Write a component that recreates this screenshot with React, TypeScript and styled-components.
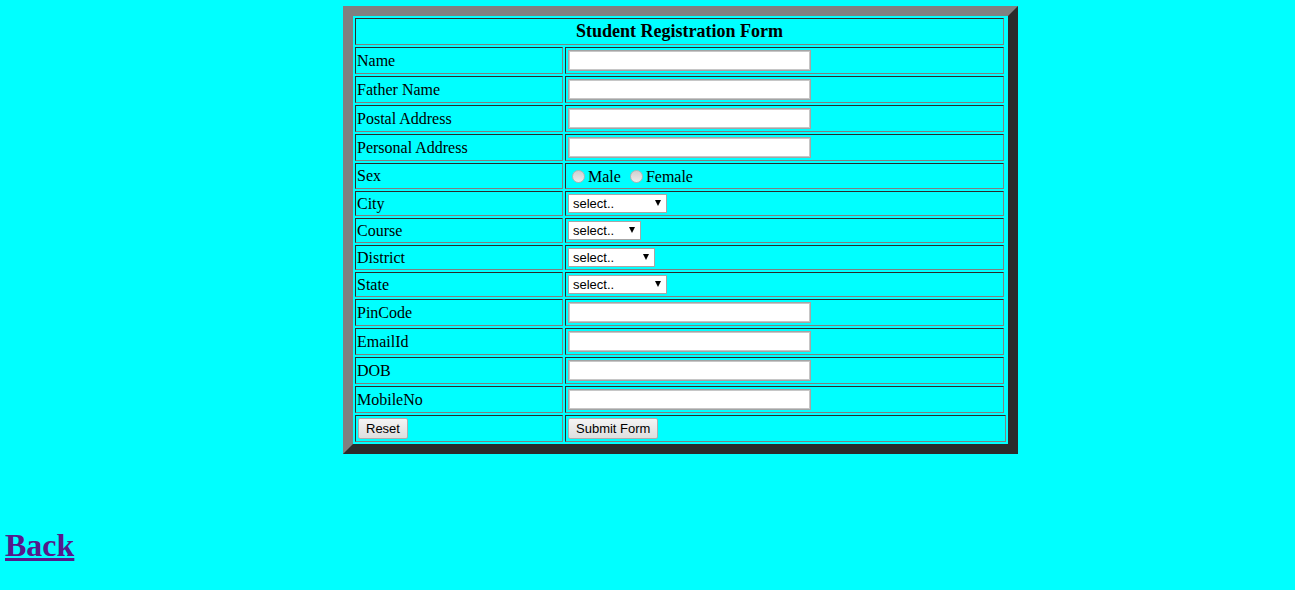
import React from "react";
import styled, { createGlobalStyle } from "styled-components";

const GlobalStyle = createGlobalStyle`
  html, body {
    margin: 0;
    background: #00ffff;
  }
  body {
    font-family: "Liberation Serif", "Times New Roman", serif;
    font-size: 16px;
    color: #000;
  }
`;

const Page = styled.div`
  padding-top: 6px;
  min-height: 590px;
  box-sizing: border-box;
`;

const FormTable = styled.table`
  box-sizing: border-box;
  width: 675px;
  margin-left: 343px;
  border-collapse: separate;
  border-spacing: 2px;
  border: 10px solid;
  border-color: #808080 #2b2b2b #2b2b2b #808080;
  background: #00ffff;
`;

const Heading = styled.th`
  border: 1px solid;
  border-color: #2b2b2b #808080 #808080 #2b2b2b;
  padding: 1px;
  font-size: 18px;
  font-weight: bold;
  line-height: 23px;
  text-align: center;
`;

const Cell = styled.td<{ $label?: boolean }>`
  box-sizing: border-box;
  width: ${(p) => (p.$label ? "208px" : "auto")};
  border: 1px solid;
  border-color: #2b2b2b #808080 #808080 #2b2b2b;
  padding: 1px;
  vertical-align: middle;
  white-space: nowrap;
`;

const Spacer = styled.td`
  width: 0;
  padding: 0;
  border: 0;
`;

const TextInput = styled.input`
  display: block;
  box-sizing: border-box;
  width: 243px;
  height: 21px;
  margin: 1px;
  border: 1px solid #a4a4a4;
  box-shadow: inset 0 0 0 1px #c6c6c6;
  background: #fff;
  outline: none;
`;

const RadioGroup = styled.div`
  display: flex;
  align-items: center;
  height: 22px;
`;

const Radio = styled.input`
  appearance: none;
  box-sizing: border-box;
  width: 13px;
  height: 13px;
  margin: 0 3px 0 5px;
  border-radius: 50%;
  border: 1px solid #b3b3b3;
  background: linear-gradient(#cfcfcf, #ebebeb);
`;

const RadioText = styled.span`
  margin: 2px 4px 0 0;
`;

const SelectWrap = styled.span<{ $w: number }>`
  position: relative;
  display: block;
  width: ${(p) => p.$w}px;
  margin: 1px;

  &::after {
    content: "";
    position: absolute;
    right: 6px;
    top: 6px;
    border-left: 3.5px solid transparent;
    border-right: 3.5px solid transparent;
    border-top: 6px solid #000;
    pointer-events: none;
  }
`;

const Select = styled.select`
  appearance: none;
  display: block;
  box-sizing: border-box;
  width: 100%;
  height: 19px;
  margin: 0;
  padding: 0 0 0 4px;
  border: 1px solid #a6a6a6;
  border-radius: 0;
  background: #fff;
  color: #000;
  font: 13px "Liberation Sans", Arial, sans-serif;
  outline: none;
`;

const Button = styled.button`
  display: block;
  height: 21px;
  margin: 1px;
  padding: 0 7px;
  border: 1px solid #acacac;
  border-radius: 2px;
  background: linear-gradient(#f4f4f4, #dedede);
  color: #000;
  font: 13px "Liberation Sans", Arial, sans-serif;
`;

const BackHeading = styled.h1`
  margin: 73px 0 0 5px;
  font-size: 32px;
  font-weight: bold;
  line-height: normal;
`;

const BackLink = styled.a`
  color: #551a8b;
  text-decoration: underline;
`;

type Field =
  | { label: string; kind: "text" }
  | { label: string; kind: "sex" }
  | { label: string; kind: "select"; width: number };

const fields: Field[] = [
  { label: "Name", kind: "text" },
  { label: "Father Name", kind: "text" },
  { label: "Postal Address", kind: "text" },
  { label: "Personal Address", kind: "text" },
  { label: "Sex", kind: "sex" },
  { label: "City", kind: "select", width: 99 },
  { label: "Course", kind: "select", width: 73 },
  { label: "District", kind: "select", width: 87 },
  { label: "State", kind: "select", width: 99 },
  { label: "PinCode", kind: "text" },
  { label: "EmailId", kind: "text" },
  { label: "DOB", kind: "text" },
  { label: "MobileNo", kind: "text" },
];

function FieldInput({ field }: { field: Field }) {
  if (field.kind === "sex") {
    return (
      <RadioGroup>
        <Radio type="radio" name="sex" />
        <RadioText>Male</RadioText>
        <Radio type="radio" name="sex" />
        <RadioText>Female</RadioText>
      </RadioGroup>
    );
  }
  if (field.kind === "select") {
    return (
      <SelectWrap $w={field.width}>
        <Select defaultValue="">
          <option value="">select..</option>
        </Select>
      </SelectWrap>
    );
  }
  return <TextInput type="text" />;
}

export default function App() {
  return (
    <Page>
      <GlobalStyle />
      <FormTable>
        <tbody>
          <tr>
            <Heading colSpan={2}>Student Registration Form</Heading>
            <Spacer />
          </tr>
          {fields.map((f) => (
            <tr key={f.label}>
              <Cell $label>{f.label}</Cell>
              <Cell>
                <FieldInput field={f} />
              </Cell>
              <Spacer />
            </tr>
          ))}
          <tr>
            <Cell $label>
              <Button type="reset">Reset</Button>
            </Cell>
            <Cell colSpan={2}>
              <Button type="submit">Submit Form</Button>
            </Cell>
          </tr>
        </tbody>
      </FormTable>
      <BackHeading>
        <BackLink href="#">Back</BackLink>
      </BackHeading>
    </Page>
  );
}
